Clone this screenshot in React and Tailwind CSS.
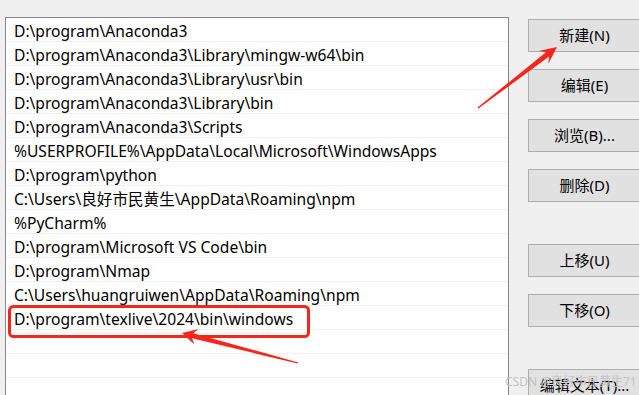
import React from "react";

const rows = [
  "D:\\program\\Anaconda3",
  "D:\\program\\Anaconda3\\Library\\mingw-w64\\bin",
  "D:\\program\\Anaconda3\\Library\\usr\\bin",
  "D:\\program\\Anaconda3\\Library\\bin",
  "D:\\program\\Anaconda3\\Scripts",
  "%USERPROFILE%\\AppData\\Local\\Microsoft\\WindowsApps",
  "D:\\program\\python",
  "C:\\Users\\良好市民黄生\\AppData\\Roaming\\npm",
  "%PyCharm%",
  "D:\\program\\Microsoft VS Code\\bin",
  "D:\\program\\Nmap",
  "C:\\Users\\huangruiwen\\AppData\\Roaming\\npm",
  "D:\\program\\texlive\\2024\\bin\\windows",
  "",
  "",
  "",
];

function arrowPoints(tx, ty, hx, hy, barbBack, joinBack, barbHalf, shaftHalf) {
  const dx = hx - tx;
  const dy = hy - ty;
  const len = Math.hypot(dx, dy);
  const ux = dx / len;
  const uy = dy / len;
  const nx = -uy;
  const ny = ux;
  const bx = hx - ux * barbBack;
  const by = hy - uy * barbBack;
  const jx = hx - ux * joinBack;
  const jy = hy - uy * joinBack;
  const pts = [
    [tx + nx * 0.6, ty + ny * 0.6],
    [jx + nx * shaftHalf, jy + ny * shaftHalf],
    [bx + nx * barbHalf, by + ny * barbHalf],
    [hx, hy],
    [bx - nx * barbHalf, by - ny * barbHalf],
    [jx - nx * shaftHalf, jy - ny * shaftHalf],
    [tx - nx * 0.6, ty - ny * 0.6],
  ];
  return pts.map((p) => p[0].toFixed(1) + "," + p[1].toFixed(1)).join(" ");
}

function Btn({ label, className = "" }) {
  return (
    <div
      className={
        "h-[33px] w-[113px] shrink-0 border border-[#adadad] bg-[#e1e1e1] flex items-center justify-center text-[15px] text-black " +
        className
      }
    >
      {label}
    </div>
  );
}

export default function App() {
  return (
    <div className="relative w-[639px] h-[395px] overflow-hidden bg-[#f0f0f0] flex font-['Noto_Sans','Noto_Sans_CJK_SC',sans-serif]">
      <div className="shrink-0 ml-[5px] mt-[17px] w-[504px] h-[400px] border border-[#828790] bg-white px-px">
        {rows.map((r, i) => (
          <div
            key={i}
            className="h-[24px] border-b border-[#f0f0f0] pl-[7px] pt-[5px] flex items-center text-[15.6px] text-black whitespace-nowrap leading-none"
          >
            {r}
          </div>
        ))}
      </div>
      <div className="shrink-0 ml-[19px] pt-[19px] flex flex-col">
        <Btn label="新建(N)" />
        <Btn label="编辑(E)" className="mt-[17px]" />
        <Btn label="浏览(B)..." className="mt-[17px]" />
        <Btn label="删除(D)" className="mt-[17px]" />
        <Btn label="上移(U)" className="mt-[42px]" />
        <Btn label="下移(O)" className="mt-[17px]" />
        <Btn label="编辑文本(T)..." className="mt-[42px]" />
      </div>

      <svg
        className="absolute left-0 top-0 pointer-events-none"
        width="639"
        height="395"
        viewBox="0 0 639 395"
      >
        <rect
          x="9.5"
          y="306.5"
          width="299"
          height="30"
          rx="4"
          fill="none"
          stroke="#f5261b"
          strokeWidth="3"
        />
        <polygon
          points={arrowPoints(478, 108, 557, 47, 17, 12, 8, 2.6)}
          fill="#f5261b"
        />
        <polygon
          points={arrowPoints(298, 363, 182, 333, 15, 11, 8, 2.6)}
          fill="#f5261b"
        />
      </svg>

      <div className="absolute left-[505px] top-[376px] text-[12px] text-[#c4c4c4] whitespace-nowrap leading-none">
        CSDN @良好市民黄生71
      </div>
    </div>
  );
}
